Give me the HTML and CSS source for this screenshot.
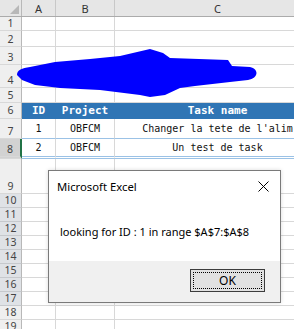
FILE: index.html
```html
<!DOCTYPE html>
<html>
	<head>
		<title>Excel - task lookup</title>
		<link rel="stylesheet" href="styles.css">
	</head>
	<body>
		<div class="sheet">
			<div class="row col-head">
				<div class="rh corner"><span class="corner-tri"></span></div>
				<div class="ca">A</div>
				<div class="cb">B</div>
				<div class="cc">C</div>
			</div>
			<div class="row h14"><div class="rh">1</div><div class="ca"></div><div class="cb"></div><div class="cc"></div></div>
			<div class="row h16"><div class="rh">2</div><div class="ca"></div><div class="cb"></div><div class="cc"></div></div>
			<div class="row h18"><div class="rh">3</div><div class="ca"></div><div class="cb"></div><div class="cc"></div></div>
			<div class="row h23"><div class="rh">4</div><div class="ca"></div><div class="cb"></div><div class="cc"></div></div>
			<div class="row h15"><div class="rh">5</div><div class="ca"></div><div class="cb"></div><div class="cc"></div></div>
			<div class="row h16 table-head">
				<div class="rh">6</div>
				<div class="ca">ID</div>
				<div class="cb">Project</div>
				<div class="cc">Task name</div>
			</div>
			<div class="row h20 table-row">
				<div class="rh">7</div>
				<div class="ca">1</div>
				<div class="cb">OBFCM</div>
				<div class="cc">Changer la tete de l'alim</div>
			</div>
			<div class="row h20 table-row table-last">
				<div class="rh active">8</div>
				<div class="ca">2</div>
				<div class="cb">OBFCM</div>
				<div class="cc">Un test de task</div>
			</div>
			<div class="row h35"><div class="rh">9</div><div class="ca"></div><div class="cb"></div><div class="cc"></div></div>
			<div class="row h14"><div class="rh sel">10</div><div class="ca"></div><div class="cb"></div><div class="cc"></div></div>
			<div class="row h14"><div class="rh sel">11</div><div class="ca"></div><div class="cb"></div><div class="cc"></div></div>
			<div class="row h14"><div class="rh sel">12</div><div class="ca"></div><div class="cb"></div><div class="cc"></div></div>
			<div class="row h14"><div class="rh sel">13</div><div class="ca"></div><div class="cb"></div><div class="cc"></div></div>
			<div class="row h14"><div class="rh sel">14</div><div class="ca"></div><div class="cb"></div><div class="cc"></div></div>
			<div class="row h14"><div class="rh sel">15</div><div class="ca"></div><div class="cb"></div><div class="cc"></div></div>
			<div class="row h14"><div class="rh sel">16</div><div class="ca"></div><div class="cb"></div><div class="cc"></div></div>
			<div class="row h14"><div class="rh sel">17</div><div class="ca"></div><div class="cb"></div><div class="cc"></div></div>
			<div class="row h14"><div class="rh">18</div><div class="ca"></div><div class="cb"></div><div class="cc"></div></div>
			<div class="row h14"><div class="rh">19</div><div class="ca"></div><div class="cb"></div><div class="cc"></div></div>

			<svg class="scribble" width="294" height="110" viewBox="0 0 294 110">
				<path fill="#0000ff" d="M17,75 C17,70 22,68 30,67 L55,62 L90,59 L120,56 L150,49 L163,53 L170,58 L228,60 L232,66 L250,67 C259,69 259,78 248,80 L230,82 L195,86 L180,88 L165,95 L150,97 L140,95 L100,90 L60,88 L35,85 L22,80 Z"/>
			</svg>

			<div class="dialog">
				<div class="dlg-title">
					<span>Microsoft Excel</span>
					<svg class="dlg-close" width="11" height="11" viewBox="0 0 11 11">
						<path d="M0.5,0.5 L10.5,10.5 M10.5,0.5 L0.5,10.5" stroke="#000" stroke-width="1" fill="none"/>
					</svg>
				</div>
				<div class="dlg-body">looking for ID : 1 in range $A$7:$A$8</div>
				<div class="dlg-foot">
					<button class="ok-button"><span>OK</span></button>
				</div>
			</div>
		</div>
	</body>
</html>
```

FILE: styles.css
```css
body{
	margin: 0;
	overflow: hidden;
	background-color: white;
}
.sheet{
	position: relative;
	width: 321px;
	font-family: "Noto Sans", "Open Sans", sans-serif;
}
.row{
	display: flex;
	height: 14px;
}
.col-head{
	height: 16px;
	background-color: #e6e6e6;
	border-bottom: 1px solid #ababab;
	font-size: 11px;
	color: #333;
}
.h14{ height: 14px; }
.h15{ height: 15px; }
.h16{ height: 16px; }
.h18{ height: 18px; }
.h20{ height: 20px; }
.h23{ height: 23px; }
.h35{ height: 35px; }

.row > div{
	box-sizing: border-box;
	border-right: 1px solid #d8d8d8;
	border-bottom: 1px solid #d8d8d8;
	display: flex;
	align-items: flex-end;
	justify-content: center;
	white-space: nowrap;
	overflow: hidden;
}
.col-head > div{
	align-items: center;
	border-bottom: none;
	border-right: 1px solid #c8c8c8;
}
.rh{
	width: 22px;
	background-color: #efefef;
	font-size: 10.5px;
	line-height: 13px;
	color: #444;
	border-right: 1px solid #b8b8b8 !important;
}
.corner{
	position: relative;
	background-color: #e6e6e6;
}
.corner-tri{
	position: absolute;
	right: 2px;
	bottom: 2px;
	width: 0;
	height: 0;
	border-left: 9px solid transparent;
	border-bottom: 9px solid #b8b8b8;
}
.rh.sel{
	background-color: #dfe2e6;
	border-bottom-color: #c6c9cd !important;
}
.rh.active{
	background-color: #d2d2d2;
	border-right: 2px solid #217346 !important;
}
.ca{ width: 34px; }
.cb{ width: 59px; }
.cc{ width: 206px; }

.table-head > div{
	font-family: "DejaVu Sans Mono", "Liberation Mono", monospace;
	font-size: 11px;
	font-weight: bold;
	color: white;
	background-color: #2f75b5;
	border-right-color: #2f75b5;
	border-bottom-color: #2f75b5;
	align-items: center;
}
.table-head > .rh{
	font-family: "Noto Sans", sans-serif;
	font-size: 10.5px;
	font-weight: normal;
	color: #444;
	background-color: #efefef;
	border-bottom-color: #d8d8d8;
}
.table-row > div{
	font-family: "DejaVu Sans Mono", "Liberation Mono", monospace;
	font-size: 10px;
	color: #111;
	align-items: center;
	border-bottom-color: #9bc2e6;
}
.table-row > .rh{
	font-family: "Noto Sans", sans-serif;
	font-size: 10.5px;
	align-items: flex-end;
	color: #444;
	border-bottom-color: #d8d8d8;
}
.table-last > div{
	border-bottom: 3px double #9bc2e6;
}

.scribble{
	position: absolute;
	left: 0;
	top: 0;
	pointer-events: none;
}

.dialog{
	position: absolute;
	left: 48px;
	top: 170px;
	width: 233px;
	height: 133px;
	box-sizing: border-box;
	border: 1px solid #7a7a7a;
	background-color: white;
	display: flex;
	flex-direction: column;
	font-family: "Noto Sans", "Open Sans", sans-serif;
	color: #000;
	box-shadow: 0 0 4px rgba(0, 0, 0, 0.15);
}
.dlg-title{
	height: 30px;
	display: flex;
	align-items: center;
	justify-content: space-between;
	padding: 0 11px 0 8px;
	font-size: 11.3px;
}
.dlg-body{
	flex: 1;
	display: flex;
	align-items: center;
	padding-left: 11px;
	font-size: 11px;
}
.dlg-foot{
	height: 41px;
	background-color: #f0f0f0;
	display: flex;
	justify-content: flex-end;
	align-items: flex-start;
	padding: 8px 15px 0 0;
	box-sizing: border-box;
}
.ok-button{
	width: 75px;
	height: 23px;
	padding: 0;
	background-color: #e1e1e1;
	border: 1px solid #3c3c3c;
	display: flex;
	font-family: "Noto Sans", sans-serif;
	font-size: 12px;
	color: #000;
}
.ok-button span{
	flex: 1;
	margin: 2px;
	border: 1px dotted #000;
	display: flex;
	align-items: center;
	justify-content: center;
}
```
